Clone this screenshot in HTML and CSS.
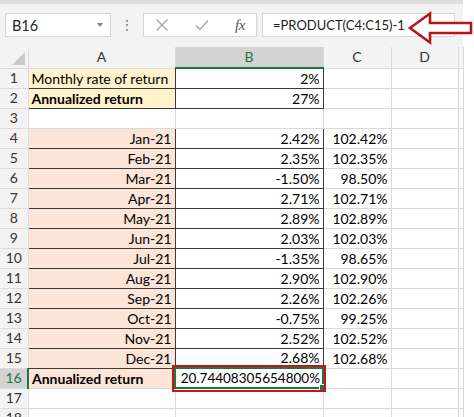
FILE: index.html
```html
<!DOCTYPE html>
<html>
<head>
<meta charset="utf-8">
<link rel="stylesheet" href="styles.css">
</head>
<body>
<div class="app">
  <div class="toolbar">
    <div class="namebox"><span class="ref">B16</span><span class="dd"></span></div>
    <div class="dots"><i></i><i></i><i></i></div>
    <div class="fxbtns">
      <svg class="ico" width="14" height="14" viewBox="0 0 14 14"><path d="M1.5 1.5 L12.5 12.5 M12.5 1.5 L1.5 12.5" stroke="#a6a6a6" stroke-width="1.4" fill="none"/></svg>
      <svg class="ico" width="14" height="14" viewBox="0 0 14 14"><path d="M1 7.5 L5 11.5 L13 2.5" stroke="#a6a6a6" stroke-width="1.4" fill="none"/></svg>
      <span class="fx">fx</span>
    </div>
    <div class="formula"><span>=PRODUCT(C4:C15)-1</span></div>
    <svg class="arrow" width="474" height="50" viewBox="0 0 474 50"><path d="M410 28 L430 13.5 L430 23 L471 23 L471 33 L430 33 L430 42.5 Z" fill="#fff" stroke="#b4161c" stroke-width="2.6" stroke-linejoin="miter"/></svg>
  </div>
  <table class="sheet">
    <colgroup><col class="c0"><col class="ca"><col class="cb"><col class="cc"><col class="cd"><col class="ce"></colgroup>
    <tr class="hdr"><th class="corner"><span class="tri"></span></th><th>A</th><th class="selh">B</th><th>C</th><th>D</th><th></th></tr>
    <tr><th>1</th><td class="y bx">Monthly rate of return</td><td class="r bx">2%</td><td></td><td></td><td></td></tr>
    <tr><th>2</th><td class="y bx b">Annualized return</td><td class="r bx">27%</td><td></td><td></td><td></td></tr>
    <tr><th>3</th><td></td><td></td><td></td><td></td><td></td></tr>
    <tr><th>4</th><td class="p bx r">Jan-21</td><td class="r bx">2.42%</td><td class="r">102.42%</td><td></td><td></td></tr>
    <tr><th>5</th><td class="p bx r">Feb-21</td><td class="r bx">2.35%</td><td class="r">102.35%</td><td></td><td></td></tr>
    <tr><th>6</th><td class="p bx r">Mar-21</td><td class="r bx">-1.50%</td><td class="r">98.50%</td><td></td><td></td></tr>
    <tr><th>7</th><td class="p bx r">Apr-21</td><td class="r bx">2.71%</td><td class="r">102.71%</td><td></td><td></td></tr>
    <tr><th>8</th><td class="p bx r">May-21</td><td class="r bx">2.89%</td><td class="r">102.89%</td><td></td><td></td></tr>
    <tr><th>9</th><td class="p bx r">Jun-21</td><td class="r bx">2.03%</td><td class="r">102.03%</td><td></td><td></td></tr>
    <tr><th>10</th><td class="p bx r">Jul-21</td><td class="r bx">-1.35%</td><td class="r">98.65%</td><td></td><td></td></tr>
    <tr><th>11</th><td class="p bx r">Aug-21</td><td class="r bx">2.90%</td><td class="r">102.90%</td><td></td><td></td></tr>
    <tr><th>12</th><td class="p bx r">Sep-21</td><td class="r bx">2.26%</td><td class="r">102.26%</td><td></td><td></td></tr>
    <tr><th>13</th><td class="p bx r">Oct-21</td><td class="r bx">-0.75%</td><td class="r">99.25%</td><td></td><td></td></tr>
    <tr><th>14</th><td class="p bx r">Nov-21</td><td class="r bx">2.52%</td><td class="r">102.52%</td><td></td><td></td></tr>
    <tr><th>15</th><td class="p bx r">Dec-21</td><td class="r bx">2.68%</td><td class="r">102.68%</td><td></td><td></td></tr>
    <tr><th class="selr">16</th><td class="p b">Annualized return</td><td class="r sel"><span class="val">20.74408305654800%</span><span class="handle"></span><span class="redbox"></span></td><td></td><td></td><td></td></tr>
    <tr><th>17</th><td></td><td></td><td></td><td></td><td></td></tr>
    <tr><th>18</th><td></td><td></td><td></td><td></td><td></td></tr>
  </table>
</div>
</body>
</html>
```
FILE: styles.css
```css
html, body {
  margin: 0;
  padding: 0;
  background: #ffffff;
}
body {
  font-family: Lato, "Liberation Sans", sans-serif;
  color: #000;
  overflow: hidden;
}
.app {
  width: 463px;
  background: #f3f3f3;
}
.toolbar {
  position: relative;
  height: 47px;
  box-sizing: border-box;
  padding: 9px 0 0 5px;
  display: flex;
  align-items: flex-start;
  border-top: 4px solid #dedede;
}
.namebox {
  width: 106px;
  height: 24px;
  box-sizing: border-box;
  background: #fff;
  border: 1px solid #d6d6d6;
  display: flex;
  align-items: center;
  justify-content: space-between;
  padding: 0 7px 0 6px;
}
.ref {
  font-size: 14.5px;
  color: #262626;
}
.dd {
  width: 0;
  height: 0;
  border-left: 3px solid transparent;
  border-right: 3px solid transparent;
  border-top: 4px solid #808080;
}
.dots {
  width: 32px;
  height: 24px;
  display: flex;
  flex-direction: column;
  align-items: center;
  justify-content: center;
  gap: 2.5px;
}
.dots i {
  display: block;
  width: 2px;
  height: 2px;
  background: #9a9a9a;
}
.fxbtns {
  width: 114px;
  height: 24px;
  box-sizing: border-box;
  background: #fff;
  border: 1px solid #d6d6d6;
  display: flex;
  align-items: center;
  padding-left: 11px;
  gap: 26px;
}
.fx {
  font-family: "Liberation Serif", serif;
  font-style: italic;
  font-size: 15px;
  color: #555;
  letter-spacing: -0.5px;
}
.formula {
  margin-left: 5px;
  width: 193px;
  height: 24px;
  box-sizing: border-box;
  background: #fff;
  border: 1px solid #d6d6d6;
  padding-left: 10px;
  display: flex;
  align-items: center;
  font-size: 13px;
  color: #1a1a1a;
}
.arrow {
  position: absolute;
  left: 0;
  top: -4px;
}
.sheet {
  border-collapse: collapse;
  table-layout: fixed;
  width: 463px;
  background: #fff;
  font-size: 14px;
}
.c0 { width: 28px; }
.ca { width: 147px; }
.cb { width: 148px; }
.cc { width: 68px; }
.cd { width: 67px; }
.ce { width: 5px; }
.sheet tr { height: 20px; }
.sheet tr.hdr { height: 21px; }
.sheet th, .sheet td {
  border: 1px solid #d9d9d9;
  padding: 0 3px;
  white-space: nowrap;
  overflow: hidden;
  line-height: 18px;
  vertical-align: bottom;
}
.sheet th {
  background: #f3f3f3;
  font-weight: normal;
  color: #333;
  text-align: center;
  padding: 0;
  vertical-align: middle;
  border-color: #dcdcdc;
}
.sheet .hdr th {
  border-top: none;
}
.sheet th:first-child {
  border-left: none;
}
.corner {
  position: relative;
}
.tri {
  position: absolute;
  right: 3px;
  bottom: 3px;
  width: 0;
  height: 0;
  border-left: 13px solid transparent;
  border-bottom: 13px solid #c9c9c9;
}
.sheet th.selh {
  background: #d3d3d3;
  color: #217346;
  border-bottom: 2px solid #217346;
}
.sheet th.selr {
  background: #d3d3d3;
  color: #217346;
  border-right: 2px solid #217346;
}
.y { background: #fff2cc; }
.p { background: #fce4d6; }
.b { font-weight: bold; }
.r { text-align: right; }
.sheet td.bx {
  border: 1px solid #3a3a3a;
}
.sheet td.p.b {
  border-top: 1px solid #3a3a3a;
}
.sheet td.sel {
  position: relative;
  overflow: visible;
  border: 2px solid #217346;
  text-align: right;
  padding-right: 2px;
}
.val {
  position: relative;
  font-size: 13.5px;
}
.handle {
  position: absolute;
  right: -4px;
  bottom: -4px;
  width: 5px;
  height: 5px;
  background: #217346;
  border: 1px solid #fff;
}
.redbox {
  position: absolute;
  left: -4px;
  top: -4px;
  right: -4px;
  bottom: -5px;
  border: 2.5px solid #c0161c;
}
```
